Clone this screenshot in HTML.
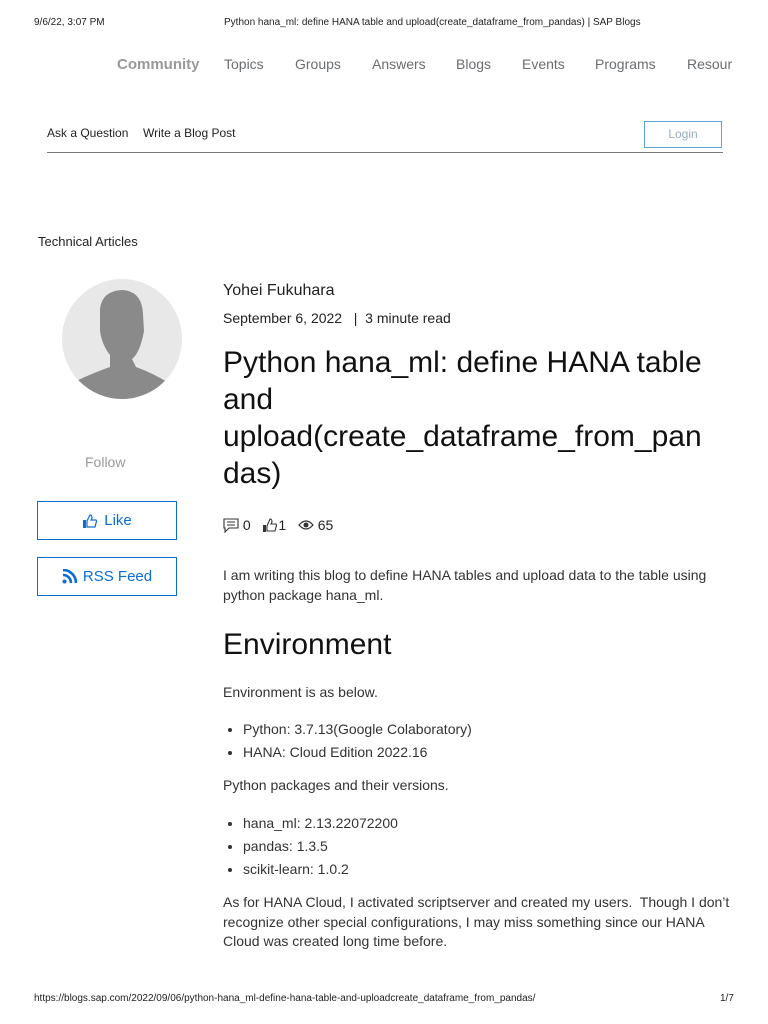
<!DOCTYPE html>
<html><head><meta charset="utf-8"><style>
body{margin:0;width:768px;height:1024px;background:#fff;font-family:"Liberation Sans",sans-serif;color:#222;position:relative;overflow:hidden}
.a{position:absolute;white-space:nowrap}
.nav{font-size:14px;color:#6a6d70;top:56px}
.p{font-size:14px;color:#333;line-height:19.5px}
.btn{position:absolute;left:37px;width:138px;height:37px;border:1px solid #0a6ed1;color:#0a6ed1;font-size:15px;display:flex;align-items:center;justify-content:center;gap:6px}
ul{margin:0;padding-left:20px}
li{font-size:14px;color:#333;line-height:23px}
</style></head><body>
<div class="a" style="left:34px;top:17px;font-size:10px">9/6/22, 3:07 PM</div>
<div class="a" style="left:224px;top:17px;font-size:10px">Python hana_ml: define HANA table and upload(create_dataframe_from_pandas) | SAP Blogs</div>
<div class="a nav" style="left:117px;font-weight:bold;font-size:15px;color:#999">Community</div>
<div class="a nav" style="left:224px">Topics</div>
<div class="a nav" style="left:295px">Groups</div>
<div class="a nav" style="left:372px">Answers</div>
<div class="a nav" style="left:456px">Blogs</div>
<div class="a nav" style="left:522px">Events</div>
<div class="a nav" style="left:595px">Programs</div>
<div class="a nav" style="left:687px">Resour</div>
<div class="a" style="left:47px;top:126px;font-size:12px">Ask a Question</div>
<div class="a" style="left:143px;top:126px;font-size:12px">Write a Blog Post</div>
<div class="a" style="left:644px;top:121px;width:76px;height:25px;border:1px solid #5ba3d6;color:#9ab;font-size:12px;text-align:center;line-height:25px">Login</div>
<div class="a" style="left:47px;top:152px;width:676px;border-top:1px solid #777"></div>
<div class="a" style="left:38px;top:234px;font-size:13px">Technical Articles</div>
<svg class="a" style="left:60px;top:279px" width="124" height="120" viewBox="0 0 124 120"><circle cx="62" cy="60" r="60" fill="#e8e8e8"/><clipPath id="c"><circle cx="62" cy="60" r="60"/></clipPath><path clip-path="url(#c)" d="M40 30 Q42 12 62 11 Q82 12 83 35 L84 52 Q80 74 72 80 L76 88 Q95 95 110 105 L120 120 L0 120 L10 105 Q30 95 50 88 L50 76 Q42 66 40 52 Z" fill="#8a8a8a"/></svg>
<div class="a" style="left:85px;top:454px;font-size:14px;color:#999">Follow</div>
<div class="btn" style="top:501px"><svg width="16" height="16" viewBox="0 0 16 16"><rect x="1" y="7" width="3" height="8" fill="#0a6ed1"/><path d="M5 8 L8 2 Q10 2 10 5 L9 7 L14 7 Q15 8 14 10 L13 14 L5 14 Z" fill="none" stroke="#0a6ed1" stroke-width="1.2"/></svg>Like</div>
<div class="btn" style="top:557px"><svg width="15" height="15" viewBox="0 0 15 15"><circle cx="2.5" cy="12.5" r="2" fill="#0a6ed1"/><path d="M1 6 A8 8 0 0 1 9 14 M1 1 A13 13 0 0 1 14 14" fill="none" stroke="#0a6ed1" stroke-width="2.6"/></svg>RSS Feed</div>
<div class="a" style="left:223px;top:282px;font-size:16px">Yohei Fukuhara</div>
<div class="a" style="left:223px;top:310px;font-size:14px">September 6, 2022 &nbsp;&nbsp;| &nbsp;3 minute read</div>
<div class="a" style="left:223px;top:344px;font-size:30px;line-height:37px;white-space:normal;width:540px;color:#111">Python hana_ml: define HANA table<br>and<br>upload(create_dataframe_from_pan<br>das)</div>
<div class="a" style="left:223px;top:517px;font-size:14px">
<svg width="16" height="15" viewBox="0 0 16 15" style="vertical-align:-3px"><path d="M1 1 H15 V10 H6 L2 14 V10 H1 Z M4 4 H12 M4 7 H12" fill="none" stroke="#333" stroke-width="1.1"/></svg> 0 &nbsp;&nbsp;<svg width="16" height="16" viewBox="0 0 16 16" style="vertical-align:-3px"><rect x="1" y="8" width="3" height="7" fill="#333"/><path d="M5 9 L8 2 Q10 2 10 5 L9 7 L14 7 Q15 8 14 10 L13 14 L5 14 Z" fill="none" stroke="#333" stroke-width="1.1"/></svg>1 &nbsp;&nbsp;<svg width="16" height="12" viewBox="0 0 16 12" style="vertical-align:-1px"><path d="M1 6 Q8 -2 15 6 Q8 14 1 6Z" fill="none" stroke="#333" stroke-width="1.3"/><circle cx="8" cy="6" r="2.5" fill="#333"/></svg> 65</div>
<div class="a p" style="left:223px;top:566px">I am writing this blog to define HANA tables and upload data to the table using<br>python package hana_ml.</div>
<div class="a" style="left:223px;top:628px;font-size:30px;color:#111">Environment</div>
<div class="a p" style="left:223px;top:683px">Environment is as below.</div>
<div class="a" style="left:223px;top:718px"><ul><li>Python: 3.7.13(Google Colaboratory)</li><li>HANA: Cloud Edition 2022.16</li></ul></div>
<div class="a p" style="left:223px;top:776px">Python packages and their versions.</div>
<div class="a" style="left:223px;top:812px"><ul><li>hana_ml: 2.13.22072200</li><li>pandas: 1.3.5</li><li>scikit-learn: 1.0.2</li></ul></div>
<div class="a p" style="left:223px;top:893px">As for HANA Cloud, I activated scriptserver and created my users.&nbsp; Though I don’t<br>recognize other special configurations, I may miss something since our HANA<br>Cloud was created long time before.</div>
<div class="a" style="left:34px;top:993px;font-size:10px">https://blogs.sap.com/2022/09/06/python-hana_ml-define-hana-table-and-uploadcreate_dataframe_from_pandas/</div>
<div class="a" style="left:720px;top:993px;font-size:10px">1/7</div>
</body></html>
